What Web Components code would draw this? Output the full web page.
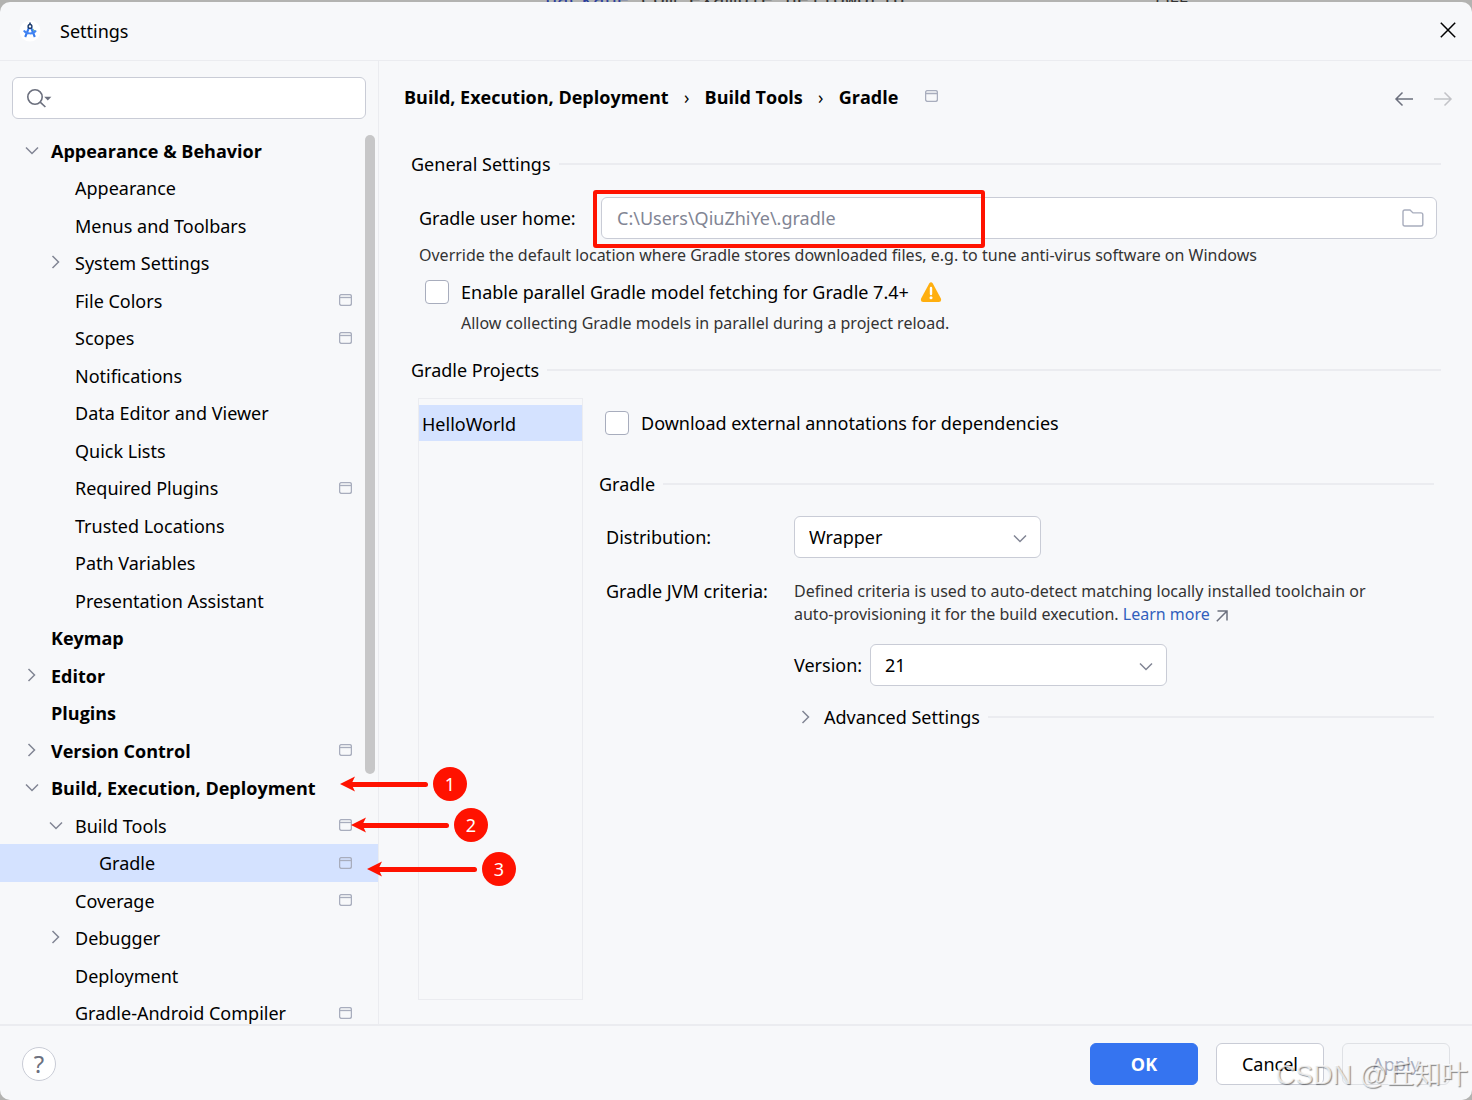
<!DOCTYPE html>
<html lang="en">
<head>
<meta charset="utf-8">
<title>Settings</title>
<style>
    html, body {
        height: 100%;
        margin: 0;
    }
    body {
        --bg: #f7f8fa;
        --line: #ebecf0;
        --border: #c9ccd6;
        --icon: #6c707e;
        --icon-soft: #a8adbd;
        --select: #d4e2ff;
        --accent: #3574f0;
        --red: #ff1200;
        --text-size: 18px;
        --hint-size: 16px;
        --bold-font: "Open Sans", "Noto Sans", sans-serif;

        font-family: "Noto Sans", "Open Sans", "Noto Sans CJK SC", sans-serif;
        font-size: var(--text-size);
        line-height: 26px;
        color: #000;
        overflow: hidden;
    }
</style>
</head>
<body>

<settings-window>
    <span slot="title">Settings</span>

    <settings-tree slot="side">
        <tree-row level="0" state="open">Appearance &amp; Behavior</tree-row>
        <tree-row level="1">Appearance</tree-row>
        <tree-row level="1">Menus and Toolbars</tree-row>
        <tree-row level="1" state="closed">System Settings</tree-row>
        <tree-row level="1" scoped>File Colors</tree-row>
        <tree-row level="1" scoped>Scopes</tree-row>
        <tree-row level="1">Notifications</tree-row>
        <tree-row level="1">Data Editor and Viewer</tree-row>
        <tree-row level="1">Quick Lists</tree-row>
        <tree-row level="1" scoped>Required Plugins</tree-row>
        <tree-row level="1">Trusted Locations</tree-row>
        <tree-row level="1">Path Variables</tree-row>
        <tree-row level="1">Presentation Assistant</tree-row>
        <tree-row level="0">Keymap</tree-row>
        <tree-row level="0" state="closed">Editor</tree-row>
        <tree-row level="0">Plugins</tree-row>
        <tree-row level="0" state="closed" scoped>Version Control</tree-row>
        <tree-row level="0" state="open">Build, Execution, Deployment</tree-row>
        <tree-row level="1" state="open" scoped>Build Tools</tree-row>
        <tree-row level="2" scoped selected>Gradle</tree-row>
        <tree-row level="1" scoped>Coverage</tree-row>
        <tree-row level="1" state="closed">Debugger</tree-row>
        <tree-row level="1">Deployment</tree-row>
        <tree-row level="1" scoped>Gradle-Android Compiler</tree-row>
    </settings-tree>

    <page-header slot="main">
        <span>Build, Execution, Deployment</span>
        <span>Build Tools</span>
        <span>Gradle</span>
    </page-header>
    <gradle-page slot="main"></gradle-page>

    <dialog-buttons slot="footer"></dialog-buttons>
</settings-window>

<mark-box style="left:593px;top:190px;width:392px;height:58px"></mark-box>
<step-marker style="left:340px;top:767px;width:127px">1</step-marker>
<step-marker style="left:351px;top:808px;width:137px">2</step-marker>
<step-marker style="left:367px;top:852px;width:149px">3</step-marker>
<water-mark>CSDN @丘知叶</water-mark>

<script>
(function () {

    function define(name, html) {
        customElements.define(name, class extends HTMLElement {
            constructor() {
                super();
                this.attachShadow({ mode: 'open' });
            }
            connectedCallback() {
                if (this._ready_) return;
                this._ready_ = true;
                this.shadowRoot.innerHTML = typeof html === 'function' ? html(this) : html;
            }
        });
    }

    const chevrons = {
        open: '<path d="M2 5.5 L8 11.5 L14 5.5"/>',
        closed: '<path d="M4.5 2 L10.5 8 L4.5 14"/>',
    };

    function chevron(state) {
        return `<svg class="chevron" width="16" height="16" viewBox="0 0 16 16" fill="none" stroke="#818594" stroke-width="1.5">${chevrons[state] || ''}</svg>`;
    }

    // small window glyph: setting is stored per project
    define('scope-icon', `
        <style>
        :host { display: block; width: 13px; height: 12px; flex: none; }
        svg { display: block; }
        </style>
        <svg width="13" height="12" viewBox="0 0 13 12" fill="none" stroke="#a8adbd">
            <rect x=".6" y=".6" width="11.8" height="10.8" rx="1.8" stroke-width="1.3"/>
            <path d="M1 3.5H12" stroke-width="1.3"/>
        </svg>
    `);

    define('settings-window', `
        <style>
        :host {
            display: flex;
            flex-direction: column;
            height: 100vh;
            background: #b3b3b1;
        }
        .behind {
            height: 2px;
            overflow: hidden;
            display: flex;
            padding: 0 284px 0 545px;
            justify-content: space-between;
            font: 20px/20px "Liberation Mono", monospace;
            color: #333;
            align-items: center;
        }
        .behind b { color: #2a3f9e; font-weight: normal; }
        .behind small { font: 18px/20px "Open Sans", sans-serif; }
        .window {
            flex: 1;
            min-height: 0;
            display: grid;
            grid-template: 59px minmax(0, 1fr) 76px / 378px minmax(0, 1fr);
            background: var(--bg);
            border-radius: 10px;
            overflow: hidden;
        }
        header {
            grid-column: 1 / -1;
            display: flex;
            align-items: center;
            padding: 0 12px 0 19px;
            border-bottom: 1px solid var(--line);
        }
        .logo { margin-right: 19px; }
        .title { flex: 1; }
        button {
            display: flex;
            margin-bottom: 2px;
            padding: 2px;
            border: 0;
            background: none;
        }
        aside {
            display: flex;
            flex-direction: column;
            min-height: 0;
        }
        .search {
            display: flex;
            align-items: center;
            margin: 16px 12px 13px;
            height: 40px;
            padding-left: 13px;
            background: #fff;
            border: 1px solid var(--border);
            border-radius: 6px;
        }
        .search input {
            flex: 1;
            min-width: 0;
            border: 0;
            outline: 0;
            background: none;
            font: inherit;
        }
        main {
            display: flex;
            flex-direction: column;
            min-height: 0;
            border-left: 1px solid var(--line);
        }
        footer {
            grid-column: 1 / -1;
            border-top: 2px solid var(--line);
        }
        </style>
        <div class="behind" aria-hidden="true">
            <span><b>package</b> com.example.helloworld</span>
            <small>OFF</small>
        </div>
        <div class="window">
            <header>
                <svg class="logo" width="22" height="22" viewBox="0 0 22 22">
                    <circle cx="11" cy="11" r="10.5" fill="#fff"/>
                    <path d="M14 8.5 L16.5 11.5 L15 13Z" fill="#34a853"/>
                    <path d="M11 5 L6.2 17 M11 5 L15.8 17" fill="none" stroke="#3b7ded" stroke-width="2.1"/>
                    <path d="M4.8 10.5 C7 14.2 14.5 14.6 17 10.5" fill="none" stroke="#4285f4" stroke-width="1.9"/>
                    <circle cx="11" cy="6.4" r="1.9" fill="#fff" stroke="#1d3c6e" stroke-width="1.4"/>
                    <path d="M11 2.6V4.6" stroke="#1d3c6e" stroke-width="1.6"/>
                </svg>
                <span class="title"><slot name="title"></slot></span>
                <button aria-label="Close">
                    <svg width="20" height="20" viewBox="0 0 20 20" fill="none" stroke="#000" stroke-width="1.5"><path d="M2.8 2.8 L17.2 17.2 M17.2 2.8 L2.8 17.2"/></svg>
                </button>
            </header>
            <aside>
                <label class="search">
                    <svg width="28" height="24" viewBox="0 0 28 24" fill="none" stroke="#6c707e" stroke-width="1.6">
                        <circle cx="9" cy="11" r="7.2"/>
                        <path d="M14.2 16.2 L19.4 21"/>
                        <path d="M18.2 10.8 H25.4 L21.8 14.4Z" fill="#6c707e" stroke="none"/>
                    </svg>
                    <input type="text" aria-label="Search settings">
                </label>
                <slot name="side"></slot>
            </aside>
            <main><slot name="main"></slot></main>
            <footer><slot name="footer"></slot></footer>
        </div>
    `);

    define('settings-tree', `
        <style>
        :host {
            display: block;
            flex: 1;
            min-height: 0;
            position: relative;
            overflow: hidden;
        }
        .rows {
            display: grid;
            grid-auto-rows: 37px 38px;
        }
        .thumb {
            position: absolute;
            top: 3px;
            right: 3px;
            bottom: 250px;
            width: 10px;
            border-radius: 5px;
            background: #c7c7c8;
        }
        </style>
        <div class="rows" role="tree"><slot></slot></div>
        <div class="thumb"></div>
    `);

    define('tree-row', el => `
        <style>
        :host { display: flex; }
        button {
            flex: 1;
            display: flex;
            align-items: center;
            padding: 0 26px 0 calc(24px + 24px * var(--level));
            border: 0;
            background: none;
            font: inherit;
            color: inherit;
            text-align: left;
        }
        :host([level="0"]) button { font-family: var(--bold-font); font-weight: bold; }
        :host([selected]) button { background: var(--select); }
        .chevron { margin: 0 11px 2px 0; }
        scope-icon { margin-bottom: 1px; }
        .name { flex: 1; white-space: nowrap; }
        </style>
        <button style="--level:${el.getAttribute('level')}" role="treeitem">
            ${chevron(el.getAttribute('state'))}
            <span class="name"><slot></slot></span>
            ${el.hasAttribute('scoped') ? '<scope-icon></scope-icon>' : ''}
        </button>
    `);

    define('page-header', `
        <style>
        :host {
            display: flex;
            align-items: center;
            height: 72px;
            flex: none;
            padding: 0 19px 0 25px;
            font-family: var(--bold-font);
            font-weight: bold;
        }
        nav { display: flex; flex: 1; align-items: center; }
        ::slotted(span:not(:first-of-type))::before {
            content: "›";
            display: inline-block;
            width: 36px;
            text-align: center;
            font-weight: normal;
        }
        scope-icon { margin: 0 0 2px 27px; }
        button {
            display: flex;
            padding: 0;
            border: 0;
            background: none;
            margin: 4px 0 0 19px;
        }
        </style>
        <nav><slot></slot><scope-icon></scope-icon></nav>
        <button aria-label="Back">
            <svg width="20" height="16" viewBox="0 0 20 16" fill="none" stroke="#6c707e" stroke-width="1.5"><path d="M19 8H2 M8.5 1.5 L2 8 L8.5 14.5"/></svg>
        </button>
        <button aria-label="Forward" disabled>
            <svg width="20" height="16" viewBox="0 0 20 16" fill="none" stroke="#c2c3c7" stroke-width="1.5"><path d="M1 8H18 M11.5 1.5 L18 8 L11.5 14.5"/></svg>
        </button>
    `);

    define('section-heading', `
        <style>
        :host { display: flex; align-items: center; gap: 8px; }
        i { flex: 1; height: 2px; background: var(--line); }
        </style>
        <slot></slot><i></i>
    `);

    define('check-row', `
        <style>
        :host { display: flex; align-items: center; gap: 11px; }
        label { display: flex; align-items: center; gap: 12px; }
        input {
            appearance: none;
            width: 24px;
            height: 24px;
            margin: 0;
            background: #fff;
            border: 1px solid #a8adbd;
            border-radius: 4px;
        }
        </style>
        <label><input type="checkbox"><span><slot></slot></span></label>
        <slot name="icon"></slot>
    `);

    define('drop-down', el => `
        <style>
        :host { display: flex; align-items: center; }
        label { width: var(--label-width); }
        .box { position: relative; width: var(--box-width); }
        select {
            appearance: none;
            display: block;
            box-sizing: border-box;
            width: 100%;
            height: 42px;
            padding: 0 40px 0 14px;
            background: #fff;
            border: 1px solid var(--border);
            border-radius: 6px;
            font: inherit;
            color: inherit;
        }
        .chevron { position: absolute; right: 13px; top: 14px; pointer-events: none; }
        </style>
        <label for="field">${el.getAttribute('label')}</label>
        <div class="box">
            <select id="field"><option>${el.getAttribute('value')}</option></select>
            ${chevron('open')}
        </div>
    `);

    define('path-field', el => `
        <style>
        :host { display: flex; align-items: center; }
        label { width: 182px; }
        .box {
            flex: 1;
            display: flex;
            align-items: center;
            height: 40px;
            padding: 0 12px 0 15px;
            background: #fff;
            border: 1px solid var(--border);
            border-radius: 6px;
        }
        input {
            flex: 1;
            min-width: 0;
            padding: 0;
            border: 0;
            outline: 0;
            background: none;
            font: inherit;
        }
        input::placeholder { color: #818594; }
        button { display: flex; padding: 0; border: 0; background: none; }
        </style>
        <label for="field">${el.getAttribute('label')}</label>
        <div class="box">
            <input id="field" type="text" placeholder="${el.getAttribute('placeholder')}">
            <button aria-label="Browse">
                <svg width="22" height="18" viewBox="0 0 22 18" fill="none" stroke="#a8adbd" stroke-width="1.4"><path d="M1 2.8 Q1 1 2.8 1 H8 L11 3.9 H19 Q20.8 3.9 20.8 5.7 V15.2 Q20.8 17 19 17 H2.8 Q1 17 1 15.2Z"/></svg>
            </button>
        </div>
    `);

    define('gradle-page', `
        <style>
        :host {
            flex: 1;
            min-height: 0;
            display: flex;
            flex-direction: column;
            padding: 18px 31px 24px 32px;
        }
        .hint { font-size: var(--hint-size); line-height: 24px; color: #333; }
        .general { padding: 20px 4px 22px 8px; }
        .general .hint { margin-top: 4px; }
        .general check-row { margin: 12px 0 6px 6px; }
        .general .sub { margin: 0 0 0 42px; }
        .projects {
            flex: 1;
            min-height: 0;
            display: flex;
            gap: 16px;
            padding: 15px 7px 0;
        }
        ul {
            box-sizing: border-box;
            width: 165px;
            margin: 0;
            padding: 6px 0;
            list-style: none;
            border: 1px solid var(--line);
        }
        li {
            height: 36px;
            line-height: 38px;
            padding-left: 3px;
            background: var(--select);
        }
        .detail { flex: 1; min-width: 0; }
        .detail check-row { margin: 12px 0 35px 6px; }
        .form {
            display: grid;
            gap: 20px 0;
            padding: 19px 0 0 7px;
        }
        .criteria { display: grid; grid-template-columns: 188px 1fr; }
        .criteria p { margin: 2px 0 18px; max-width: 600px; line-height: 23px; }
        .criteria drop-down { margin-bottom: 18px; }
        a { color: #315fbd; text-decoration: none; }
        .external { margin-left: 6px; vertical-align: -2px; }
        .advanced { display: flex; align-items: center; gap: 10px; margin-left: 4px; }
        .advanced section-heading { flex: 1; }
        </style>
        <section-heading>General Settings</section-heading>
        <div class="general">
            <path-field label="Gradle user home:" placeholder="C:\\Users\\QiuZhiYe\\.gradle"></path-field>
            <div class="hint">Override the default location where Gradle stores downloaded files, e.g. to tune anti-virus software on Windows</div>
            <check-row>
                Enable parallel Gradle model fetching for Gradle 7.4+
                <svg slot="icon" width="22" height="20" viewBox="0 0 22 20">
                    <path d="M9.2 1.4 Q11 -.9 12.8 1.4 L20.9 16.6 Q21.9 19.6 18.9 20 H3.1 Q.1 19.6 1.1 16.6Z" fill="#ffaf0f"/>
                    <path d="M11 6V12" stroke="#fff" stroke-width="2.4" stroke-linecap="round"/>
                    <circle cx="11" cy="15.8" r="1.5" fill="#fff"/>
                </svg>
            </check-row>
            <div class="hint sub">Allow collecting Gradle models in parallel during a project reload.</div>
        </div>
        <section-heading>Gradle Projects</section-heading>
        <div class="projects">
            <ul><li>HelloWorld</li></ul>
            <div class="detail">
                <check-row>Download external annotations for dependencies</check-row>
                <section-heading>Gradle</section-heading>
                <div class="form">
                    <drop-down label="Distribution:" value="Wrapper" style="--label-width:188px;--box-width:247px"></drop-down>
                    <div class="criteria">
                        <span>Gradle JVM criteria:</span>
                        <div>
                            <p class="hint">Defined criteria is used to auto-detect matching locally installed toolchain or auto-provisioning it for the build execution. <a href="#">Learn more</a><svg class="external" width="12" height="12" viewBox="0 0 12 12" fill="none" stroke="#6c707e" stroke-width="1.5"><path d="M1.5 1H11V10.5 M11 1 L.8 11.2"/></svg></p>
                            <drop-down label="Version:" value="21" style="--label-width:76px;--box-width:297px"></drop-down>
                            <div class="advanced">${chevron('closed')}<section-heading>Advanced Settings</section-heading></div>
                        </div>
                    </div>
                </div>
            </div>
        </div>
    `);

    define('dialog-buttons', `
        <style>
        :host {
            display: flex;
            align-items: center;
            gap: 18px;
            padding: 17px 22px 0;
        }
        button {
            box-sizing: border-box;
            width: 108px;
            height: 42px;
            padding: 0;
            background: #fff;
            border: 1px solid var(--border);
            border-radius: 6px;
            font: inherit;
            color: #000;
        }
        .ok {
            background: var(--accent);
            border-color: var(--accent);
            color: #fff;
            font-family: var(--bold-font);
            font-weight: bold;
        }
        .apply { background: none; border-color: #dfe1e5; color: #a8adbd; }
        .help {
            width: 34px;
            height: 34px;
            margin-right: auto;
            border-radius: 50%;
            font-size: 24px;
            color: var(--icon);
        }
        </style>
        <button class="help" aria-label="Help">?</button>
        <button class="ok">OK</button>
        <button>Cancel</button>
        <button class="apply" disabled>Apply</button>
    `);

    // red annotations drawn over the dialog
    define('mark-box', `
        <style>
        :host {
            position: absolute;
            box-sizing: border-box;
            border: 4px solid var(--red);
            border-radius: 3px;
            pointer-events: none;
        }
        </style>
    `);

    define('step-marker', `
        <style>
        :host {
            position: absolute;
            display: flex;
            align-items: center;
            pointer-events: none;
        }
        svg { flex: none; }
        .shaft {
            flex: 1;
            height: 5px;
            margin: 0 5px 0 -5px;
            border-radius: 0 3px 3px 0;
            background: var(--red);
        }
        .badge {
            width: 34px;
            line-height: 34px;
            border-radius: 50%;
            background: var(--red);
            color: #fff;
            text-align: center;
        }
        </style>
        <svg width="15" height="16" viewBox="0 0 15 16"><path d="M0 8 L15 .4 L11.4 8 L15 15.6Z" fill="#ff1200"/></svg>
        <span class="shaft"></span>
        <span class="badge"><slot></slot></span>
    `);

    define('water-mark', `
        <style>
        :host {
            position: absolute;
            right: 4px;
            bottom: 5px;
            font: 27px/40px "Liberation Sans", "Noto Sans CJK SC", sans-serif;
            color: rgba(255, 255, 255, .75);
            text-shadow: 1px 1px 1px rgba(0, 0, 0, .45);
            pointer-events: none;
        }
        </style>
        <slot></slot>
    `);

}());
</script>
</body>
</html>
